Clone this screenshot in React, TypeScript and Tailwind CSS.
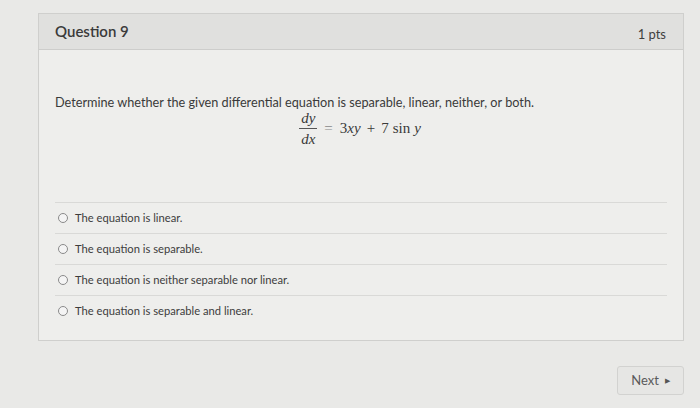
import React from 'react';

const options = [
  'The equation is linear.',
  'The equation is separable.',
  'The equation is neither separable nor linear.',
  'The equation is separable and linear.',
];

function Radio() {
  return <span className="inline-block w-[10px] h-[10px] rounded-full border border-[#8a8a8a] bg-[#f4f4f4] shrink-0" />;
}

export default function App() {
  return (
    <div className="min-h-screen w-[700px] h-[408px] bg-[#e9e9e7] pt-[13px] text-[#3b3b3b]" style={{ fontFamily: 'Lato, "Open Sans", sans-serif' }}>
      <div className="ml-[38px] w-[646px] border border-[#cfcfcd] bg-[#eeeeec]">
        <div className="h-[36px] bg-[#e0e0de] border-b border-[#cdcdcb] flex items-baseline justify-between pl-[16px] pr-[17px] pt-[6px]">
          <span className="text-[15px] font-semibold text-[#3a3a3a]">Question 9</span>
          <span className="text-[13px] text-[#3f3f3f] relative top-[2px]">1 pts</span>
        </div>
        <div className="px-[16px] pt-[44px] pb-[14px]">
          <p className="text-[12.7px] leading-[16px] text-[#3a3a3a]">
            Determine whether the given differential equation is separable, linear, neither, or both.
          </p>
          <div className="flex justify-center items-center text-[#3a3a3a]" style={{ fontFamily: '"Liberation Serif", "DejaVu Serif", serif' }}>
            <div className="flex items-center ml-[-2px]">
              <div className="flex flex-col items-center text-[15px] italic leading-[16px]">
                <span className="pb-[2px]">dy</span>
                <span className="border-t border-[#555] pt-[2px] px-[2px]">dx</span>
              </div>
              <span className="text-[15px] ml-[7px] text-[#8a8a8a]">=</span>
              <span className="text-[15px] ml-[7px] flex items-baseline">
                <span>3<i>xy</i></span>
                <span className="mx-[6px]">+</span>
                <span>7</span>
                <span className="ml-[4px]">sin</span>
                <i className="ml-[4px]">y</i>
              </span>
            </div>
          </div>
          <div className="mt-[55px]">
            {options.map((o, i) => (
              <div key={i} className="h-[31px] border-t border-[#d9d9d7] flex items-center gap-[7px] pl-[3px]">
                <Radio />
                <span className="text-[11.2px] text-[#3d3d3d]">{o}</span>
              </div>
            ))}
          </div>
        </div>
      </div>
      <div className="flex justify-end pr-[16px] mt-[25px]">
        <div className="w-[67px] h-[29px] border border-[#d2d2d0] rounded-[3px] bg-[#e6e6e4] flex items-center justify-center gap-[6px]">
          <span className="text-[13px] text-[#5a5a5a]">Next</span>
          <span className="text-[7px] text-[#555]">▶</span>
        </div>
      </div>
    </div>
  );
}
